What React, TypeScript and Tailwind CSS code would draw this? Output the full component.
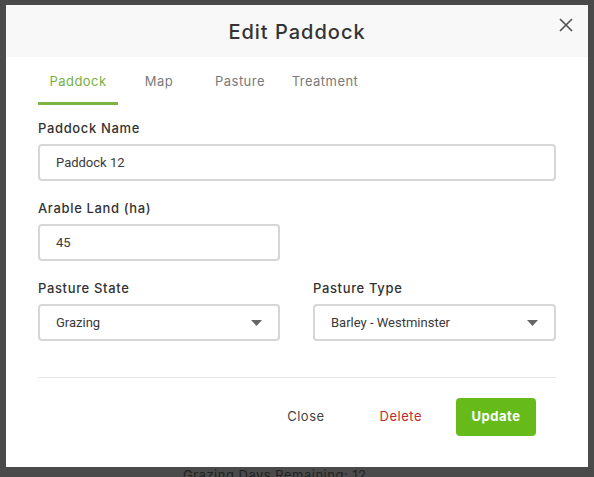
import React from "react";

const mont = { fontFamily: "Inter, 'Open Sans', sans-serif" };

function Caret() {
  return (
    <svg width="11" height="6" viewBox="0 0 11 6" className="shrink-0">
      <path d="M0 0 L11 0 L5.5 6 Z" fill="#666" />
    </svg>
  );
}

function Field({ label, children }: { label: string; children: React.ReactNode }) {
  return (
    <div className="flex flex-col">
      <div className="text-[13px] font-medium text-[#333] leading-[16px] mb-[8px] tracking-[0.65px]">{label}</div>
      {children}
    </div>
  );
}

function Box({ value, select, w }: { value: string; select?: boolean; w: string }) {
  return (
    <div
      className={`${w} h-[37px] border-2 border-[#d6d6d6] rounded-[4px] bg-white flex items-center justify-between pl-[16px] pr-[16px]`}
    >
      <span className="text-[13px] text-[#3a3a3a]" style={{ fontFamily: "Roboto, 'Liberation Sans', sans-serif" }}>
        {value}
      </span>
      {select && <Caret />}
    </div>
  );
}

export default function App() {
  return (
    <div className="w-[594px] h-[477px] bg-[#4a4a4a] overflow-hidden pt-[5px] pl-[6px]" style={mont}>
      <div className="w-[582px] h-[462px] bg-white flex flex-col">
        <div className="h-[52px] bg-[#f8f8f8] relative flex items-center justify-center">
          <span className="text-[20px] font-medium text-[#333] tracking-[1px] pt-[2px]">Edit Paddock</span>
          <svg className="absolute right-[15px] top-[13px]" width="14" height="14" viewBox="0 0 14 14">
            <path d="M1 1 L13 13 M13 1 L1 13" stroke="#555" strokeWidth="1.7" />
          </svg>
        </div>
        <div className="px-[32px] flex flex-col">
          <div className="flex h-[48px] text-[13px] text-[#7a7a7a] tracking-[0.45px]">
            <div className="w-[80px] flex items-center justify-center border-b-[3px] border-[#7cb342] text-[#76b043] pt-[4px]">
              Paddock
            </div>
            <div className="w-[82px] flex items-center justify-center pt-[1px]">Map</div>
            <div className="w-[80px] flex items-center justify-center pt-[1px]">Pasture</div>
            <div className="w-[90px] flex items-center justify-center pt-[1px]">Treatment</div>
          </div>
          <div className="mt-[15px] flex flex-col gap-[19px]">
            <Field label="Paddock Name">
              <Box value="Paddock 12" w="w-[518px]" />
            </Field>
            <Field label="Arable Land (ha)">
              <Box value="45" w="w-[242px]" />
            </Field>
            <div className="flex gap-[33px]">
              <Field label="Pasture State">
                <Box value="Grazing" select w="w-[242px]" />
              </Field>
              <Field label="Pasture Type">
                <Box value="Barley - Westminster" select w="w-[243px]" />
              </Field>
            </div>
          </div>
          <div className="mt-[36px] w-[518px] h-px bg-[#e8e8e8]" />
          <div className="mt-[20px] w-[518px] flex items-center justify-end text-[13px] tracking-[0.5px]">
            <span className="text-[#444] mr-[55px]">Close</span>
            <span className="text-[#c62828] mr-[34px]">Delete</span>
            <div className="w-[80px] h-[38px] rounded-[4px] bg-[#66bb1a] flex items-center justify-center text-white font-bold mr-[20px]">
              Update
            </div>
          </div>
        </div>
      </div>
      <div className="ml-[177px] mt-[0px] text-[13px] text-[#222] leading-[16px] tracking-[0.5px]">Grazing Days Remaining: 12</div>
    </div>
  );
}
